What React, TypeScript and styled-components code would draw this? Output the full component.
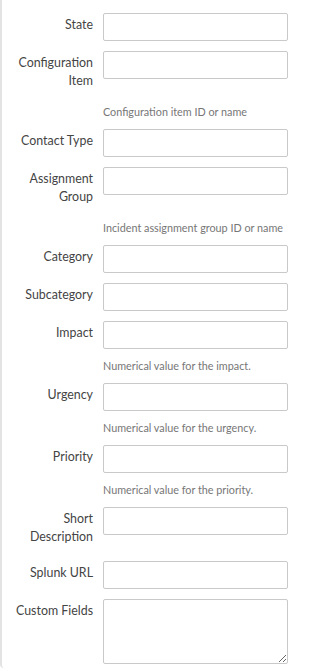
import React from "react";
import styled, { createGlobalStyle } from "styled-components";

const GlobalStyle = createGlobalStyle`
    html, body {
        margin: 0;
        padding: 0;
        background: #fff;
    }
    body {
        font-family: Lato, "Liberation Sans", sans-serif;
        color: #444;
    }
`;

interface field {
    label: string,
    help?: string,
    multiline?: boolean
};

const fields: field[] = [
    {label: 'State'},
    {label: 'Configuration Item', help: 'Configuration item ID or name'},
    {label: 'Contact Type'},
    {label: 'Assignment Group', help: 'Incident assignment group ID or name'},
    {label: 'Category'},
    {label: 'Subcategory'},
    {label: 'Impact', help: 'Numerical value for the impact.'},
    {label: 'Urgency', help: 'Numerical value for the urgency.'},
    {label: 'Priority', help: 'Numerical value for the priority.'},
    {label: 'Short Description'},
    {label: 'Splunk URL'},
    {label: 'Custom Fields', multiline: true},
];

const App: React.FC = () => {
    return (
        <>
            <GlobalStyle />
            <Panel>
                {
                    fields.map((f) => (
                        <ControlGroup key={f.label}>
                            <Row>
                                <Label>{f.label}</Label>
                                {
                                    f.multiline
                                    &&
                                    <TextArea />
                                    ||
                                    <TextInput type="text" />
                                }
                            </Row>
                            {f.help && <Help>{f.help}</Help>}
                        </ControlGroup>
                    ))
                }
            </Panel>
        </>
    )
}

const Panel = styled.div`
    box-sizing: border-box;
    width: 317px;
    min-height: 668px;
    padding-top: 13px;
    border-left: 2px solid #e3e3e3;
    border-bottom-left-radius: 4px;
`;

const ControlGroup = styled.div`
    margin-bottom: 10px;
`;

const Row = styled.div`
    display: flex;
    align-items: flex-start;
    gap: 10px;
`;

const Label = styled.label`
    box-sizing: border-box;
    width: 91px;
    flex: none;
    padding: 3px 0 5px 8px;
    text-align: right;
    font-size: 12.4px;
    line-height: 18px;
    color: #444;
`;

const TextInput = styled.input`
    box-sizing: border-box;
    width: 185px;
    height: 28px;
    margin: 0;
    padding: 4px 6px;
    border: 1px solid #c9c9c9;
    border-radius: 2px;
    background: #fff;
    font: inherit;
    font-size: 13px;
`;

const TextArea = styled.textarea`
    box-sizing: border-box;
    width: 185px;
    height: 65px;
    margin: 0;
    padding: 4px 6px;
    border: 1px solid #c9c9c9;
    border-radius: 2px;
    background: #fff;
    font: inherit;
    font-size: 13px;
    resize: vertical;
`;

const Help = styled.div`
    margin: 10px 0 0 101px;
    font-size: 10.8px;
    line-height: 14px;
    color: #767676;
`;

export default App;
